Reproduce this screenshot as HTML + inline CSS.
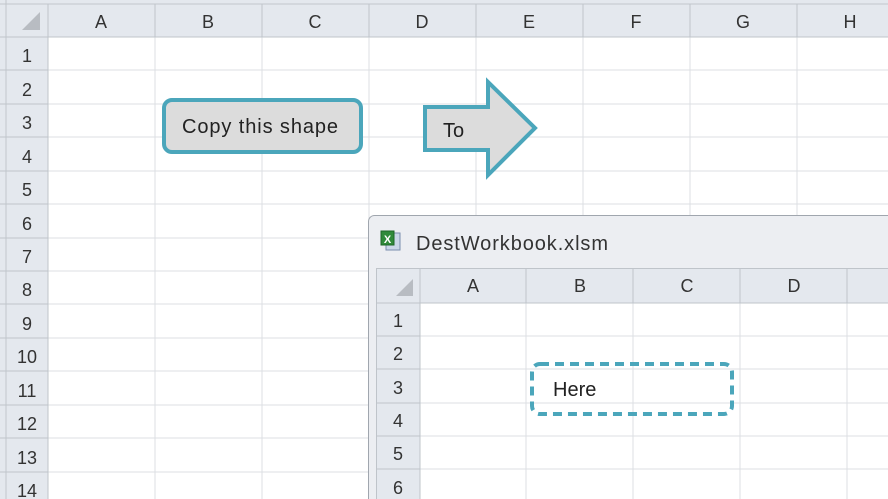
<!DOCTYPE html>
<html><head><style>
*{margin:0;padding:0;box-sizing:border-box}
body{width:888px;height:499px;overflow:hidden;background:#fff;position:relative;font-family:"Liberation Sans",sans-serif;}
.a{position:absolute}
</style></head><body>
<svg class="a" style="left:0;top:0" width="888" height="499">
<rect x="0" y="0" width="888" height="37" fill="#e4e8ee"/>
<rect x="0" y="0" width="48" height="499" fill="#e4e8ee"/>
<line x1="0" y1="4" x2="888" y2="4" stroke="#c2c6cc"/>
<line x1="6" y1="0" x2="6" y2="499" stroke="#c2c6cc"/>
<path d="M40 12 L40 30 L22 30 Z" fill="#b8bcc2"/>
<g stroke="#dcdfe3">
<line x1="155" y1="37" x2="155" y2="499"/><line x1="262" y1="37" x2="262" y2="499"/><line x1="369" y1="37" x2="369" y2="499"/><line x1="476" y1="37" x2="476" y2="499"/><line x1="583" y1="37" x2="583" y2="499"/><line x1="690" y1="37" x2="690" y2="499"/><line x1="797" y1="37" x2="797" y2="499"/>
<line x1="48" y1="70" x2="888" y2="70"/><line x1="48" y1="104" x2="888" y2="104"/><line x1="48" y1="137" x2="888" y2="137"/><line x1="48" y1="171" x2="888" y2="171"/><line x1="48" y1="204" x2="888" y2="204"/><line x1="48" y1="238" x2="888" y2="238"/><line x1="48" y1="271" x2="888" y2="271"/><line x1="48" y1="304" x2="888" y2="304"/><line x1="48" y1="338" x2="888" y2="338"/><line x1="48" y1="371" x2="888" y2="371"/><line x1="48" y1="405" x2="888" y2="405"/><line x1="48" y1="438" x2="888" y2="438"/><line x1="48" y1="472" x2="888" y2="472"/>
</g>
<g stroke="#bfc4ca">
<line x1="48" y1="4" x2="48" y2="499"/><line x1="0" y1="37" x2="888" y2="37"/>
<line x1="155" y1="4" x2="155" y2="37"/><line x1="262" y1="4" x2="262" y2="37"/><line x1="369" y1="4" x2="369" y2="37"/><line x1="476" y1="4" x2="476" y2="37"/><line x1="583" y1="4" x2="583" y2="37"/><line x1="690" y1="4" x2="690" y2="37"/><line x1="797" y1="4" x2="797" y2="37"/>
<line x1="0" y1="70" x2="48" y2="70"/><line x1="0" y1="104" x2="48" y2="104"/><line x1="0" y1="137" x2="48" y2="137"/><line x1="0" y1="171" x2="48" y2="171"/><line x1="0" y1="204" x2="48" y2="204"/><line x1="0" y1="238" x2="48" y2="238"/><line x1="0" y1="271" x2="48" y2="271"/><line x1="0" y1="304" x2="48" y2="304"/><line x1="0" y1="338" x2="48" y2="338"/><line x1="0" y1="371" x2="48" y2="371"/><line x1="0" y1="405" x2="48" y2="405"/><line x1="0" y1="438" x2="48" y2="438"/><line x1="0" y1="472" x2="48" y2="472"/>
</g>
<g font-size="18" fill="#333" text-anchor="middle" font-family="Liberation Sans">
<text x="101" y="28">A</text><text x="208" y="28">B</text><text x="315" y="28">C</text><text x="422" y="28">D</text><text x="529" y="28">E</text><text x="636" y="28">F</text><text x="743" y="28">G</text><text x="850" y="28">H</text>
<text x="27" y="62">1</text><text x="27" y="96">2</text><text x="27" y="129">3</text><text x="27" y="163">4</text><text x="27" y="196">5</text><text x="27" y="230">6</text><text x="27" y="263">7</text><text x="27" y="296">8</text><text x="27" y="330">9</text><text x="27" y="363">10</text><text x="27" y="397">11</text><text x="27" y="430">12</text><text x="27" y="464">13</text><text x="27" y="497">14</text>
</g>
<rect x="164" y="100" width="197" height="52" rx="8" fill="#dcdcdc" stroke="#4ba6bb" stroke-width="4"/>
<text x="182" y="133" font-size="20" fill="#222" textLength="156">Copy this shape</text>
<path d="M425 107 L488 107 L488 82 L535 128 L488 175 L488 150 L425 150 Z" fill="#dcdcdc" stroke="#4ba6bb" stroke-width="4" stroke-linejoin="miter"/>
<text x="443" y="137" font-size="20" fill="#222">To</text>
<!-- window -->
<rect x="368.5" y="215.5" width="530" height="300" rx="6" fill="#eceef2" stroke="#a0a6ae"/>
<rect x="376" y="268" width="520" height="240" fill="#fff"/>
<rect x="376" y="268" width="520" height="35" fill="#e4e8ee"/>
<rect x="376" y="268" width="44" height="240" fill="#e4e8ee"/>
<path d="M413 279 L413 296 L396 296 Z" fill="#b8bcc2"/>
<g stroke="#dcdfe3">
<line x1="526" y1="303" x2="526" y2="499"/><line x1="633" y1="303" x2="633" y2="499"/><line x1="740" y1="303" x2="740" y2="499"/><line x1="847" y1="303" x2="847" y2="499"/>
<line x1="420" y1="336" x2="888" y2="336"/><line x1="420" y1="369" x2="888" y2="369"/><line x1="420" y1="403" x2="888" y2="403"/><line x1="420" y1="436" x2="888" y2="436"/><line x1="420" y1="469" x2="888" y2="469"/>
</g>
<g stroke="#bfc4ca">
<line x1="376" y1="268.5" x2="888" y2="268.5"/><line x1="376.5" y1="268" x2="376.5" y2="499"/>
<line x1="420" y1="268" x2="420" y2="499"/><line x1="376" y1="303" x2="888" y2="303"/>
<line x1="526" y1="268" x2="526" y2="303"/><line x1="633" y1="268" x2="633" y2="303"/><line x1="740" y1="268" x2="740" y2="303"/><line x1="847" y1="268" x2="847" y2="303"/>
<line x1="376" y1="336" x2="420" y2="336"/><line x1="376" y1="369" x2="420" y2="369"/><line x1="376" y1="403" x2="420" y2="403"/><line x1="376" y1="436" x2="420" y2="436"/><line x1="376" y1="469" x2="420" y2="469"/>
</g>
<g font-size="18" fill="#333" text-anchor="middle" font-family="Liberation Sans">
<text x="473" y="292">A</text><text x="580" y="292">B</text><text x="687" y="292">C</text><text x="794" y="292">D</text>
<text x="398" y="327">1</text><text x="398" y="360">2</text><text x="398" y="394">3</text><text x="398" y="427">4</text><text x="398" y="460">5</text><text x="398" y="494">6</text>
</g>
<rect x="532" y="364" width="200" height="50" rx="8" fill="none" stroke="#4ba6bb" stroke-width="4" stroke-dasharray="9 6"/>
<text x="553" y="396" font-size="20" fill="#222">Here</text>
<rect x="386" y="233" width="14" height="17" fill="#c9d6e8" stroke="#7a8fae"/>
<rect x="381" y="231" width="13" height="14" fill="#2f8a3a" stroke="#1d6628"/>
<text x="387.5" y="243" font-size="11" font-weight="bold" fill="#fff" text-anchor="middle">X</text>
<text x="416" y="250" font-size="20" fill="#333" textLength="192">DestWorkbook.xlsm</text>
</svg>
</body></html>
